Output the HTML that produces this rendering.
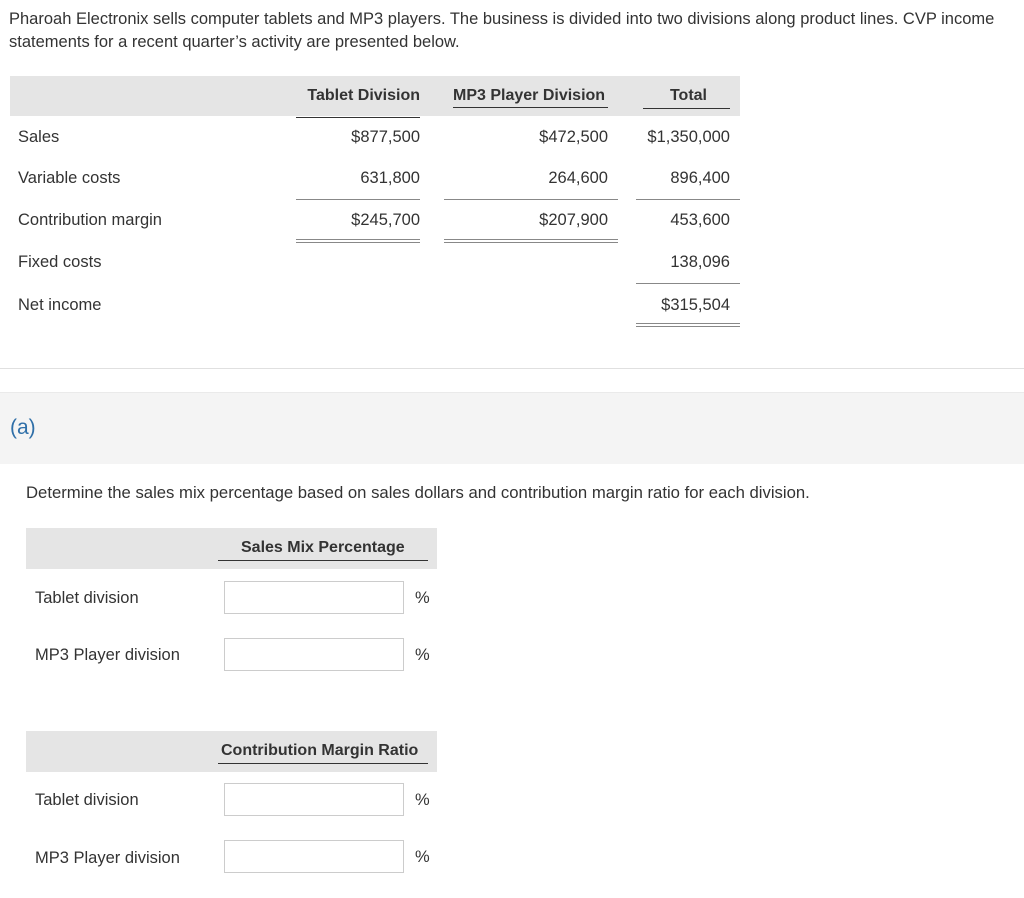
<!DOCTYPE html>
<html><head><style>
body{margin:0;width:1024px;height:898px;background:#fff;font-family:"Liberation Sans",sans-serif;color:#333;font-size:16.5px;position:relative;overflow:hidden}
.a{position:absolute;white-space:nowrap}
.r{text-align:right}
.h{font-weight:bold;font-size:16px}
.band{position:absolute;background:#e5e5e5}
.l{position:absolute;height:1px;background:#333}
.g{position:absolute;height:1px;background:#888}
.d{position:absolute;height:2px;border-top:1px solid #888;border-bottom:1px solid #888}
.in{position:absolute;width:180px;height:33px;border:1px solid #ccc;box-sizing:border-box;background:#fff}
</style></head><body>
<div class="a" style="left:9px;top:8px;line-height:23px;font-size:16.5px">Pharoah Electronix sells computer tablets and MP3 players. The business is divided into two divisions along product lines. CVP income<br>statements for a recent quarter’s activity are presented below.</div>
<div class="band" style="left:10px;top:76px;width:730px;height:40px"></div>
<div class="a r h" style="left:280px;width:140px;top:87px">Tablet Division</div>
<div class="a h" style="left:453px;top:87px">MP3 Player Division</div>
<div class="a r h" style="left:643px;width:64px;top:87px">Total</div>
<div class="l" style="left:296px;width:124px;top:117px"></div>
<div class="l" style="left:453px;width:155px;top:107px"></div>
<div class="l" style="left:643px;width:87px;top:108px"></div>

<div class="a" style="left:18px;top:128px">Sales</div>
<div class="a r" style="left:296px;width:124px;top:128px">$877,500</div>
<div class="a r" style="left:444px;width:164px;top:128px">$472,500</div>
<div class="a r" style="left:620px;width:110px;top:128px">$1,350,000</div>

<div class="a" style="left:18px;top:169px">Variable costs</div>
<div class="a r" style="left:296px;width:124px;top:169px">631,800</div>
<div class="a r" style="left:444px;width:164px;top:169px">264,600</div>
<div class="a r" style="left:636px;width:94px;top:169px">896,400</div>
<div class="g" style="left:296px;width:124px;top:199px"></div>
<div class="g" style="left:444px;width:174px;top:199px"></div>
<div class="g" style="left:636px;width:104px;top:199px"></div>

<div class="a" style="left:18px;top:211px">Contribution margin</div>
<div class="a r" style="left:296px;width:124px;top:211px">$245,700</div>
<div class="a r" style="left:444px;width:164px;top:211px">$207,900</div>
<div class="a r" style="left:636px;width:94px;top:211px">453,600</div>
<div class="d" style="left:296px;width:124px;top:239px"></div>
<div class="d" style="left:444px;width:174px;top:239px"></div>

<div class="a" style="left:18px;top:253px">Fixed costs</div>
<div class="a r" style="left:636px;width:94px;top:253px">138,096</div>
<div class="g" style="left:636px;width:104px;top:283px"></div>

<div class="a" style="left:18px;top:296px">Net income</div>
<div class="a r" style="left:636px;width:94px;top:296px">$315,504</div>
<div class="d" style="left:636px;width:104px;top:323px"></div>

<div style="position:absolute;left:0;top:368px;width:1024px;height:1px;background:#e0e0e0"></div>
<div style="position:absolute;left:0;top:392px;width:1024px;height:71px;background:#f4f4f4;border-top:1px solid #eaeaea"></div>
<div class="a" style="left:10px;top:416px;font-size:21px;color:#2f6fa8">(a)</div>

<div class="a" style="left:26px;top:483px;font-size:16.7px">Determine the sales mix percentage based on sales dollars and contribution margin ratio for each division.</div>

<div class="band" style="left:26px;top:528px;width:411px;height:41px"></div>
<div class="a h" style="left:241px;top:539px">Sales Mix Percentage</div>
<div class="l" style="left:218px;width:210px;top:560px"></div>
<div class="a" style="left:35px;top:589px">Tablet division</div>
<div class="in" style="left:224px;top:581px"></div><div class="a" style="left:415px;top:589px">%</div>
<div class="a" style="left:35px;top:646px">MP3 Player division</div>
<div class="in" style="left:224px;top:638px"></div><div class="a" style="left:415px;top:646px">%</div>

<div class="band" style="left:26px;top:731px;width:411px;height:41px"></div>
<div class="a h" style="left:221px;top:742px">Contribution Margin Ratio</div>
<div class="l" style="left:218px;width:210px;top:763px"></div>
<div class="a" style="left:35px;top:791px">Tablet division</div>
<div class="in" style="left:224px;top:783px"></div><div class="a" style="left:415px;top:791px">%</div>
<div class="a" style="left:35px;top:849px">MP3 Player division</div>
<div class="in" style="left:224px;top:840px"></div><div class="a" style="left:415px;top:848px">%</div>
</body></html>
